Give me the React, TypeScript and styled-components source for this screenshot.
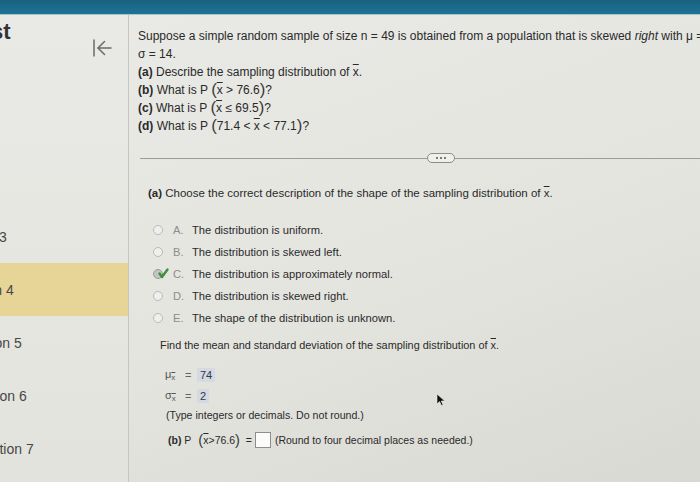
import React from "react";
import styled, { createGlobalStyle } from "styled-components";

const GlobalStyle = createGlobalStyle`
  html, body {
    margin: 0;
    padding: 0;
  }
  body {
    width: 700px;
    height: 482px;
    overflow: hidden;
    background: #e4e4df;
    font-family: "Liberation Sans", Arial, sans-serif;
    color: #2a2a2a;
  }
`;

const Page = styled.div`
  display: flex;
  flex-direction: column;
  width: 700px;
  height: 482px;
  overflow: hidden;
`;

const TopBar = styled.div`
  height: 14px;
  flex-shrink: 0;
  background: linear-gradient(180deg, #19617f 0%, #1d7396 100%);
  border-bottom: 1px solid #a9c3cf;
`;

const Body = styled.div`
  flex: 1;
  display: flex;
  min-height: 0;
`;

const Sidebar = styled.aside`
  width: 128px;
  flex-shrink: 0;
  overflow: hidden;
  border-right: 1px solid #c6c6c1;
  background: linear-gradient(180deg, #e9e9e5 0%, #e3e3de 100%);
  display: flex;
  flex-direction: column;
`;

const SidebarHeader = styled.div`
  height: 195px;
  flex-shrink: 0;
  display: flex;
  justify-content: space-between;
  align-items: flex-start;
`;

const SidebarTitle = styled.h2`
  margin: 6px 0 0 -130px;
  font-size: 22px;
  line-height: 22px;
  font-weight: 700;
  color: #333;
  white-space: nowrap;
`;

const CollapseButton = styled.button`
  margin: 23px 16px 0 0;
  padding: 0;
  border: 0;
  background: none;
  width: 20px;
  height: 20px;
  display: flex;
`;

const QuestionItem = styled.div<{ $active?: boolean }>`
  height: 53px;
  flex-shrink: 0;
  display: flex;
  align-items: center;
  overflow: hidden;
  font-size: 14px;
  color: #474747;
  white-space: nowrap;
  background: ${(p) => (p.$active ? "#e6d597" : "transparent")};
`;

const QuestionLabel = styled.span<{ $offset: number }>`
  margin-left: ${(p) => p.$offset}px;
`;

const Main = styled.main`
  position: relative;
  flex: 1;
  overflow: hidden;
  padding: 12px 0 0 9px;
  background: linear-gradient(160deg, #e9e9e5 0%, #e4e4df 55%, #d9d9d3 100%);
`;

const Content = styled.div`
  width: 604px;
  font-size: 11.5px;
`;

const Line = styled.div<{ $indent?: number; $size?: number }>`
  line-height: 18px;
  white-space: nowrap;
  padding-left: ${(p) => p.$indent ?? 0}px;
  font-size: ${(p) => p.$size ?? 11.5}px;
`;

const Bold = styled.b`
  font-weight: 700;
`;

const Paren = styled.span`
  font-size: 1.4em;
  line-height: 0;
  font-weight: 300;
  color: #3a3a3a;
  vertical-align: -1px;
`;

const XBar = styled.span`
  text-decoration: overline;
  text-decoration-thickness: 1px;
`;

const Separator = styled.div`
  margin: 18px 0 0 2px;
  display: flex;
  align-items: center;
  height: 10px;
`;

const Rule = styled.div`
  flex: 1;
  height: 1px;
  background: #9c9c98;
`;

const MorePill = styled.div`
  width: 26px;
  height: 8px;
  border: 1px solid #8c8c88;
  border-radius: 6px;
  background: #efefec;
  display: flex;
  align-items: center;
  justify-content: center;
  gap: 2px;
`;

const Dot = styled.span`
  width: 2px;
  height: 2px;
  border-radius: 50%;
  background: #555;
`;

const Prompt = styled(Line)`
  margin-top: 21px;
`;

const Options = styled.div`
  margin-top: 17px;
  display: flex;
  flex-direction: column;
  font-size: 11.2px;
`;

const OptionRow = styled.label`
  height: 22px;
  display: flex;
  align-items: center;
  padding-left: 15px;
  white-space: nowrap;
`;

const OptionLetter = styled.span`
  width: 19px;
  color: #8d8d8a;
`;

const OptionText = styled.span`
  color: #2b2b2b;
`;

const FindLine = styled(Line)`
  margin-top: 7px;
`;

const Stats = styled.div`
  margin-top: 10px;
  padding-left: 27px;
  display: flex;
  flex-direction: column;
  font-size: 11px;
`;

const StatRow = styled.div<{ $h: number }>`
  height: ${(p) => p.$h}px;
  display: flex;
  align-items: center;
  white-space: nowrap;
`;

const Sym = styled.span`
  width: 20px;
  color: #555;
`;

const Sub = styled.sub`
  font-size: 8px;
  vertical-align: -2px;
`;

const Eq = styled.span`
  width: 12px;
  color: #666;
`;

const AnswerBox = styled.span`
  display: inline-block;
  padding: 1px 3px;
  background: #d4d9e3;
  color: #333a48;
  border-radius: 1px;
`;

const PartB = styled.div`
  margin-top: 7px;
  padding-left: 30px;
  font-size: 10.5px;
  line-height: 18px;
  white-space: nowrap;
  display: flex;
  align-items: center;
`;

const BlankBox = styled.span`
  display: inline-block;
  width: 14px;
  height: 14px;
  margin: 0 4px 0 3px;
  background: #fbfbfa;
  border: 1px solid #8e8e8e;
`;

const Cursor = styled.svg`
  position: absolute;
  left: 307px;
  top: 378px;
`;

const questions = [
  { n: 3, offset: -61 },
  { n: 4, offset: -54, active: true },
  { n: 5, offset: -46 },
  { n: 6, offset: -41 },
  { n: 7, offset: -34 },
];

const options = [
  { letter: "A.", text: "The distribution is uniform." },
  { letter: "B.", text: "The distribution is skewed left." },
  { letter: "C.", text: "The distribution is approximately normal.", checked: true },
  { letter: "D.", text: "The distribution is skewed right." },
  { letter: "E.", text: "The shape of the distribution is unknown." },
];

const RadioMark: React.FC<{ checked?: boolean }> = ({ checked }) => (
  <svg width="20" height="14" viewBox="0 0 20 14">
    <circle
      cx="5"
      cy="7"
      r="4.5"
      fill={checked ? "#c4c4c2" : "#efefed"}
      stroke={checked ? "#9a9a98" : "#b9b9b6"}
      strokeWidth="1"
    />
    {checked && (
      <path
        d="M6.5 6.5 L9 10 L14.5 2.5"
        fill="none"
        stroke="#3f8f3c"
        strokeWidth="2.4"
        strokeLinecap="round"
        strokeLinejoin="round"
      />
    )}
  </svg>
);

export default function App() {
  return (
    <Page>
      <GlobalStyle />
      <TopBar />
      <Body>
        <Sidebar>
          <SidebarHeader>
            <SidebarTitle>Question List</SidebarTitle>
            <CollapseButton aria-label="Collapse question list">
              <svg width="20" height="20" viewBox="0 0 20 20">
                <g fill="none" stroke="#6a6a6a" strokeWidth="1.5" strokeLinecap="round" strokeLinejoin="round">
                  <path d="M2 2 V18" />
                  <path d="M6 10 H19" />
                  <path d="M12.5 3.5 L6 10 L12.5 16.5" />
                </g>
              </svg>
            </CollapseButton>
          </SidebarHeader>
          {questions.map((q) => (
            <QuestionItem key={q.n} $active={q.active}>
              <QuestionLabel $offset={q.offset}>Question {q.n}</QuestionLabel>
            </QuestionItem>
          ))}
        </Sidebar>

        <Main>
          <Content>
            <Line $size={12}>
              Suppose a simple random sample of size n = 49 is obtained from a population that is skewed{" "}
              <i>right</i> with μ = 74 and
            </Line>
            <Line $size={12}>σ = 14.</Line>
            <Line $size={12}>
              <Bold>(a)</Bold> Describe the sampling distribution of <XBar>x</XBar>.
            </Line>
            <Line $size={12}>
              <Bold>(b)</Bold> What is P <Paren>(</Paren>
              <XBar>x</XBar> &gt; 76.6<Paren>)</Paren>?
            </Line>
            <Line $size={12}>
              <Bold>(c)</Bold> What is P <Paren>(</Paren>
              <XBar>x</XBar> ≤ 69.5<Paren>)</Paren>?
            </Line>
            <Line $size={12}>
              <Bold>(d)</Bold> What is P <Paren>(</Paren>71.4 &lt; <XBar>x</XBar> &lt; 77.1<Paren>)</Paren>?
            </Line>

            <Separator>
              <Rule />
              <MorePill>
                <Dot />
                <Dot />
                <Dot />
              </MorePill>
              <Rule />
            </Separator>

            <Prompt $indent={10}>
              <Bold>(a)</Bold> Choose the correct description of the shape of the sampling distribution of{" "}
              <XBar>x</XBar>.
            </Prompt>

            <Options>
              {options.map((o) => (
                <OptionRow key={o.letter}>
                  <RadioMark checked={o.checked} />
                  <OptionLetter>{o.letter}</OptionLetter>
                  <OptionText>{o.text}</OptionText>
                </OptionRow>
              ))}
            </Options>

            <FindLine $indent={22} $size={10.9}>
              Find the mean and standard deviation of the sampling distribution of <XBar>x</XBar>.
            </FindLine>

            <Stats>
              <StatRow $h={22}>
                <Sym>
                  μ<Sub><XBar>x</XBar></Sub>
                </Sym>
                <Eq>=</Eq>
                <AnswerBox>74</AnswerBox>
              </StatRow>
              <StatRow $h={20}>
                <Sym>
                  σ<Sub><XBar>x</XBar></Sub>
                </Sym>
                <Eq>=</Eq>
                <AnswerBox>2</AnswerBox>
              </StatRow>
            </Stats>

            <Line $indent={28} $size={10.6}>
              (Type integers or decimals. Do not round.)
            </Line>

            <PartB>
              <Bold>(b)</Bold>&nbsp;P&nbsp;<Paren>&nbsp;(</Paren>
              <XBar>x</XBar>&gt;76.6<Paren>)</Paren>&nbsp;&nbsp;=
              <BlankBox />
              (Round to four decimal places as needed.)
            </PartB>
          </Content>

          <Cursor width="10" height="14" viewBox="0 0 10 14">
            <path d="M1 1 L1 11 L3.6 8.6 L5.4 12.6 L7 11.9 L5.3 8 L8.8 8 Z" fill="#111" stroke="#eee" strokeWidth="0.6" />
          </Cursor>
        </Main>
      </Body>
    </Page>
  );
}
